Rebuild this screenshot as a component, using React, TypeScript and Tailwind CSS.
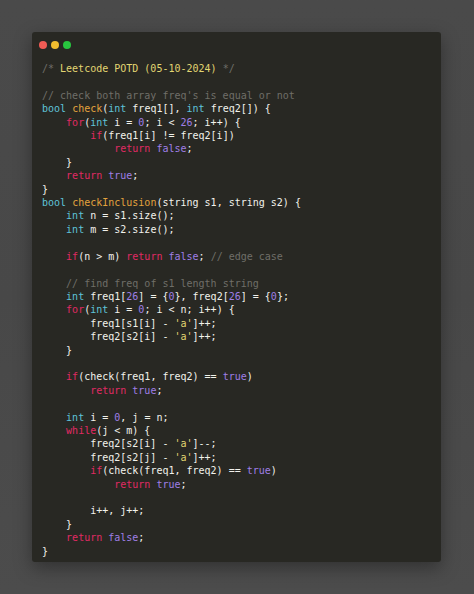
import React from 'react';

type Tok = [string, string?];

// colour per token kind (muted monokai)
const colors: Record<string, string> = {
  k: 'text-[#e02a63]',
  t: 'text-[#5fc3d9]',
  f: 'text-[#e3a33e]',
  n: 'text-[#9f7fe6]',
  s: 'text-[#e2d672]',
  c: 'text-[#6f6e68]',
};

const lines: Tok[][] = [
  [['/* ', 'c'], ['Leetcode POTD (05-10-2024)', 's'], [' */', 'c']],
  [],
  [["// check both array freq's is equal or not", 'c']],
  [['bool', 't'], [' '], ['check', 'f'], ['('], ['int', 't'], [' freq1[], '], ['int', 't'], [' freq2[]) {']],
  [['    '], ['for', 'k'], ['('], ['int', 't'], [' i = '], ['0', 'n'], ['; i < '], ['26', 'n'], ['; i++) {']],
  [['        '], ['if', 'k'], ['(freq1[i] != freq2[i])']],
  [['            '], ['return', 'k'], [' '], ['false', 'n'], [';']],
  [['    }']],
  [['    '], ['return', 'k'], [' '], ['true', 'n'], [';']],
  [['}']],
  [['bool', 't'], [' '], ['checkInclusion', 'f'], ['(string s1, string s2) {']],
  [['    '], ['int', 't'], [' n = s1.size();']],
  [['    '], ['int', 't'], [' m = s2.size();']],
  [],
  [['    '], ['if', 'k'], ['(n > m) '], ['return', 'k'], [' '], ['false', 'n'], ['; '], ['// edge case', 'c']],
  [],
  [['    '], ['// find freq of s1 length string', 'c']],
  [['    '], ['int', 't'], [' freq1['], ['26', 'n'], ['] = {'], ['0', 'n'], ['}, freq2['], ['26', 'n'], ['] = {'], ['0', 'n'], ['};']],
  [['    '], ['for', 'k'], ['('], ['int', 't'], [' i = '], ['0', 'n'], ['; i < n; i++) {']],
  [['        freq1[s1[i] - '], ["'a'", 's'], [']++;']],
  [['        freq2[s2[i] - '], ["'a'", 's'], [']++;']],
  [['    }']],
  [],
  [['    '], ['if', 'k'], ['(check(freq1, freq2) == '], ['true', 'n'], [')']],
  [['        '], ['return', 'k'], [' '], ['true', 'n'], [';']],
  [],
  [['    '], ['int', 't'], [' i = '], ['0', 'n'], [', j = n;']],
  [['    '], ['while', 'k'], ['(j < m) {']],
  [['        freq2[s2[i] - '], ["'a'", 's'], [']--;']],
  [['        freq2[s2[j] - '], ["'a'", 's'], [']++;']],
  [['        '], ['if', 'k'], ['(check(freq1, freq2) == '], ['true', 'n'], [')']],
  [['            '], ['return', 'k'], [' '], ['true', 'n'], [';']],
  [],
  [['        i++, j++;']],
  [['    }']],
  [['    '], ['return', 'k'], [' '], ['false', 'n'], [';']],
  [['}']],
];

export default function App() {
  return (
    <div className="w-[474px] h-[594px] bg-gradient-to-b from-[#4a4a4a] via-[#484848] to-[#4c4c4c] pt-[32px] pl-[32px]">
      <div className="w-[409px] h-[530px] bg-[#282823] rounded-[3px] shadow-[0_6px_18px_rgba(0,0,0,0.35)] pt-[9px] pl-[7px]">
        {/* window dots */}
        <div className="flex gap-[4px]">
          <span className="w-[8px] h-[8px] rounded-full bg-[#f15c55]" />
          <span className="w-[8px] h-[8px] rounded-full bg-[#f1bd2f]" />
          <span className="w-[8px] h-[8px] rounded-full bg-[#28c63f]" />
        </div>
        <pre className="mt-[13px] pl-[3px] text-[10px] leading-[13.42px] text-[#f2f2ec] font-['DejaVu_Sans_Mono',monospace]">
          {lines.map((line, i) => (
            <div key={i} className="h-[13.42px]">
              {line.map(([txt, kind], j) => (
                <span key={j} className={kind ? colors[kind] : undefined}>
                  {txt}
                </span>
              ))}
            </div>
          ))}
        </pre>
      </div>
    </div>
  );
}
